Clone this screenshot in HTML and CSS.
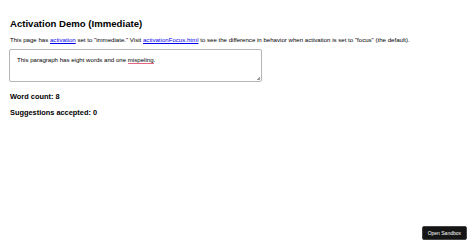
FILE: index.html
```html
<!DOCTYPE html>
<html lang="en">
<head>
    <meta charset="UTF-8">
    <meta name="viewport" content="width=device-width, initial-scale=1.0">
    <title>Activation Demo (Immediate)</title>
    <link rel="stylesheet" href="styles.css">
</head>
<body>
    <h1>Activation Demo (Immediate)</h1>
    <p class="intro">This page has <a href="#">activation</a> set to "immediate." Visit <a href="#">activationFocus.html</a> to see the difference in behavior when activation is set to "focus" (the default).</p>

    <div class="editor">This paragraph has eight words and one <span class="typo">mispeling</span>.</div>

    <p class="stat">Word count: 8</p>
    <p class="stat">Suggestions accepted: 0</p>

    <button class="sandbox">Open Sandbox</button>
</body>
</html>
```

FILE: styles.css
```css
body {
    font-family: "Liberation Sans", Arial, sans-serif;
    margin: 0;
    padding: 0 10px;
    color: #000;
    background: #fff;
}
h1 {
    font-size: 9.6px;
    margin: 18px 0 0;
    line-height: 12px;
}
.intro {
    font-size: 6.1px;
    margin: 6px 0 0;
    line-height: 8px;
}
.intro a {
    color: #0000ee;
}
.editor {
    width: 237px;
    height: 19px;
    margin: 5px 0 0 -1px;
    padding: 6px 7px;
    border: 1px solid #b5b5b5;
    border-radius: 2px;
    font-size: 6.1px;
    line-height: 8px;
    position: relative;
}
.editor::after {
    content: "";
    position: absolute;
    right: 1px;
    bottom: 1px;
    width: 3px;
    height: 3px;
    background: linear-gradient(135deg, transparent 50%, #999 50%);
}
.typo {
    border-bottom: 1px solid #e8637f;
}
.stat {
    font-size: 7.4px;
    font-weight: bold;
    line-height: 9px;
    margin: 10px 0 0;
}
.stat + .stat {
    margin-top: 7px;
}
.sandbox {
    position: fixed;
    right: 7px;
    bottom: 8px;
    background: #151515;
    color: #fff;
    border: 1px solid #444;
    border-radius: 2px;
    font-family: "Liberation Sans", Arial, sans-serif;
    font-size: 5px;
    padding: 3px 5px;
    line-height: 6px;
}
```
